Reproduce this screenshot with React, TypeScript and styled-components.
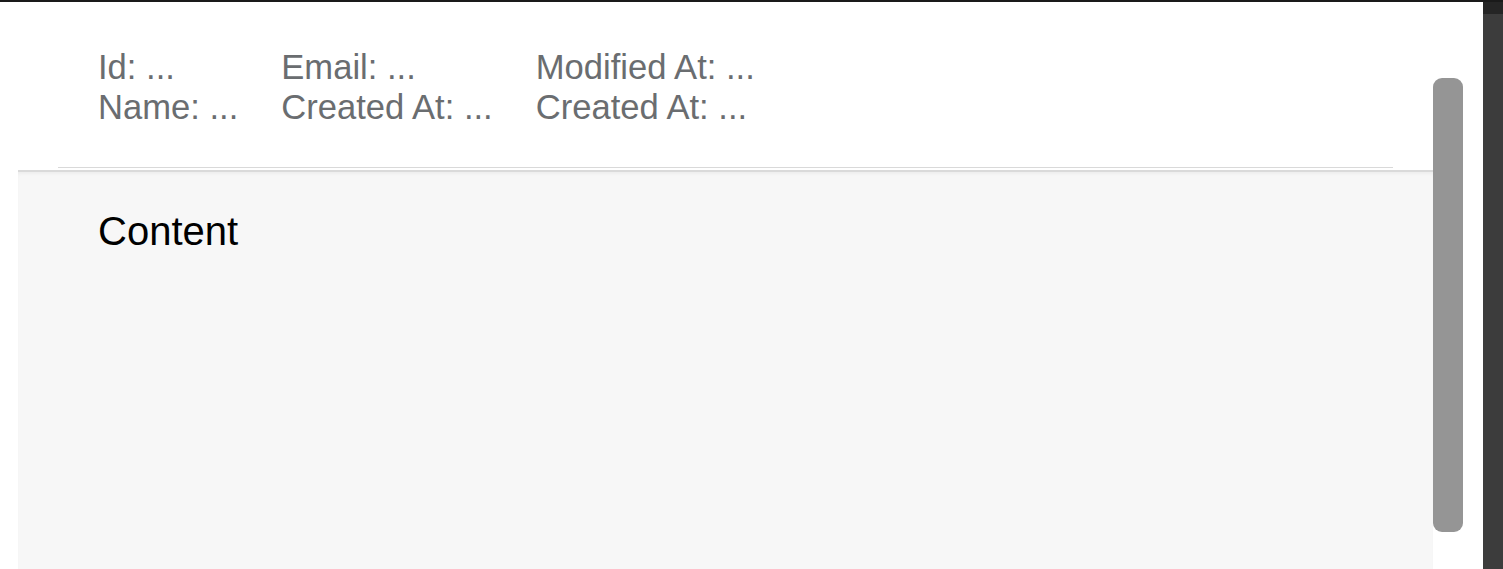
import React from "react";
import styled, { createGlobalStyle } from "styled-components";

const GlobalStyle = createGlobalStyle`
  html, body {
    margin: 0;
    padding: 0;
    height: 100%;
    overflow: hidden;
  }
  body {
    font-family: "Liberation Sans", Arial, sans-serif;
    background: #ffffff;
  }
  #root {
    height: 100%;
  }
`;

const Frame = styled.div`
  display: flex;
  flex-direction: column;
  height: 100vh;
  background: #ffffff;
`;

const TopBar = styled.div`
  height: 2px;
  flex-shrink: 0;
  background: #1a1a1a;
`;

const Main = styled.div`
  flex: 1;
  display: flex;
  min-height: 0;
`;

const Page = styled.div`
  flex: 1;
  display: flex;
  background: #ffffff;
  min-width: 0;
`;

const Panel = styled.div`
  flex: 1;
  display: flex;
  flex-direction: column;
  margin-left: 18px;
  min-width: 0;
`;

const Header = styled.header`
  margin: 0 40px;
  padding: 45px 40px 40px;
  border-bottom: 1px solid #d9d9d9;
  display: flex;
  gap: 43px;
`;

const Column = styled.div`
  display: flex;
  flex-direction: column;
`;

const Field = styled.span`
  font-size: 34.6px;
  line-height: 40px;
  color: #6a6d70;
  white-space: nowrap;
`;

const Body = styled.section`
  flex: 1;
  margin-top: 2px;
  background: #f7f7f7;
  border-top: 2px solid #dadada;
  box-shadow: inset 0 3px 4px -2px rgba(0, 0, 0, 0.06);
  padding: 35px 80px 0;
`;

const Title = styled.div`
  font-size: 40px;
  line-height: 48px;
  color: #000000;
`;

const Track = styled.div`
  width: 50px;
  flex-shrink: 0;
  padding-top: 76px;
  background: #ffffff;
`;

const Thumb = styled.div`
  width: 30px;
  height: 454px;
  border-radius: 9px;
  background: #959595;
`;

const WindowEdge = styled.div`
  width: 20px;
  flex-shrink: 0;
  background: #3c3c3c;
  border-top: 12px solid #252525;
`;

const columns = [
  ["Id: ...", "Name: ..."],
  ["Email: ...", "Created At: ..."],
  ["Modified At: ...", "Created At: ..."],
];

export default function App() {
  return (
    <>
      <GlobalStyle />
      <Frame>
        <TopBar />
        <Main>
          <Page>
            <Panel>
              <Header>
                {columns.map((fields, i) => (
                  <Column key={i}>
                    {fields.map((f, j) => (
                      <Field key={j}>{f}</Field>
                    ))}
                  </Column>
                ))}
              </Header>
              <Body>
                <Title>Content</Title>
              </Body>
            </Panel>
            <Track>
              <Thumb />
            </Track>
          </Page>
          <WindowEdge />
        </Main>
      </Frame>
    </>
  );
}
